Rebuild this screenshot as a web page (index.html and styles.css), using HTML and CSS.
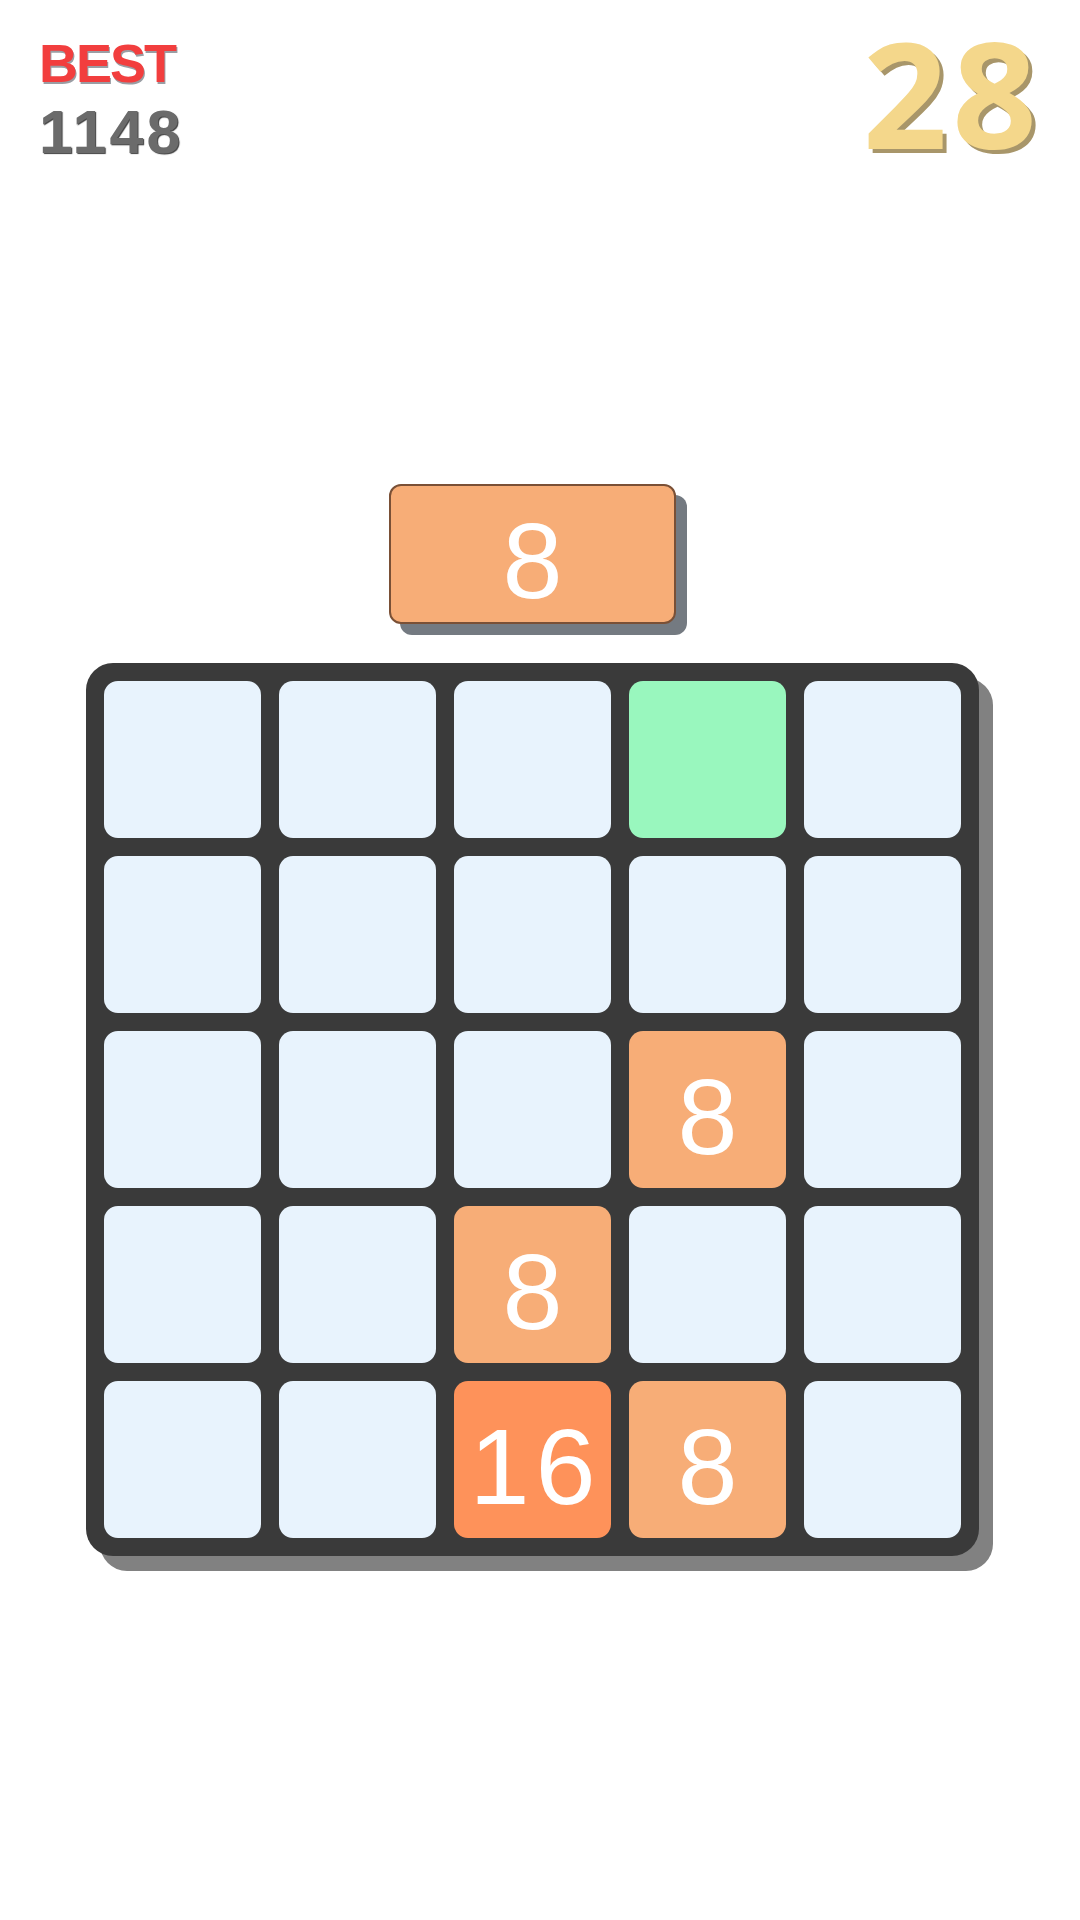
FILE: index.html
```html
<!DOCTYPE html>
<html lang="en">
<head>
<meta charset="utf-8">
<title>2048 Drop</title>
<link rel="stylesheet" href="styles.css">
</head>
<body>
<div class="page">
  <header class="top">
    <div class="best">
      <div class="best-label">BEST</div>
      <div class="best-value">1148</div>
    </div>
    <div class="score">28</div>
  </header>

  <main class="stage">
    <div class="next">8</div>

    <div class="board">
      <div class="cell"></div>
      <div class="cell"></div>
      <div class="cell"></div>
      <div class="cell cell-drop"></div>
      <div class="cell"></div>

      <div class="cell"></div>
      <div class="cell"></div>
      <div class="cell"></div>
      <div class="cell"></div>
      <div class="cell"></div>

      <div class="cell"></div>
      <div class="cell"></div>
      <div class="cell"></div>
      <div class="cell tile-8">8</div>
      <div class="cell"></div>

      <div class="cell"></div>
      <div class="cell"></div>
      <div class="cell tile-8">8</div>
      <div class="cell"></div>
      <div class="cell"></div>

      <div class="cell"></div>
      <div class="cell"></div>
      <div class="cell tile-16">16</div>
      <div class="cell tile-8">8</div>
      <div class="cell"></div>
    </div>
  </main>
</div>
</body>
</html>
```

FILE: styles.css
```css
* {
  box-sizing: border-box;
}

html,
body {
  margin: 0;
  padding: 0;
  background: #ffffff;
}

.page {
  width: 1080px;
  height: 1920px;
  background: #ffffff;
  font-family: "Liberation Sans", Arial, sans-serif;
  overflow: hidden;
}

/* header: best score on the left, current score on the right */
.top {
  height: 200px;
  display: flex;
  justify-content: space-between;
  align-items: flex-start;
  padding: 0 38px 0 39px;
}

.best {
  display: flex;
  flex-direction: column;
  padding-top: 36px;
}

.best-label {
  font-weight: 700;
  font-size: 54px;
  line-height: 1;
  letter-spacing: -2px;
  color: #f23e3e;
  text-shadow: 1px 2px 0 #9a9ea4;
}

.best-value {
  margin-top: 12px;
  font-weight: 700;
  font-size: 61px;
  line-height: 1;
  letter-spacing: 3px;
  color: #6b6b6b;
  text-shadow: 1px 1px 1px #3f3f3f;
}

.score {
  padding-top: 3px;
  font-family: "Open Sans", "Liberation Sans", sans-serif;
  font-weight: 700;
  font-size: 148px;
  line-height: 1.2;
  letter-spacing: 5px;
  color: #f4d78b;
  text-shadow: 4px 4px 0 #a8966a;
}

/* play area */
.stage {
  width: 893px;
  margin-left: 86px;
  padding-top: 284px;
  display: flex;
  flex-direction: column;
  align-items: center;
}

.next {
  width: 287px;
  height: 140px;
  display: flex;
  align-items: center;
  justify-content: center;
  padding-top: 14px;
  background: #f7ad77;
  border: 2px solid #7a5036;
  border-radius: 12px;
  box-shadow: 11px 11px 0 #747a81;
  color: #ffffff;
  font-size: 108px;
  line-height: 1;
}

.board {
  margin-top: 39px;
  width: 893px;
  height: 893px;
  padding: 18px;
  display: grid;
  grid-template-columns: repeat(5, 157px);
  grid-template-rows: repeat(5, 157px);
  gap: 18px;
  background: #3a3a3a;
  border-radius: 27px;
  box-shadow: 14px 15px 0 #818181;
}

.cell {
  display: flex;
  align-items: center;
  justify-content: center;
  padding-top: 14px;
  background: #e8f3fd;
  border-radius: 14px;
  color: #ffffff;
  font-size: 108px;
  line-height: 1;
}

.cell-drop {
  background: #99f7be;
}

.tile-8 {
  background: #f7ad77;
}

.tile-16 {
  background: #fe925a;
  letter-spacing: 6px;
  text-indent: 6px;
}
```
